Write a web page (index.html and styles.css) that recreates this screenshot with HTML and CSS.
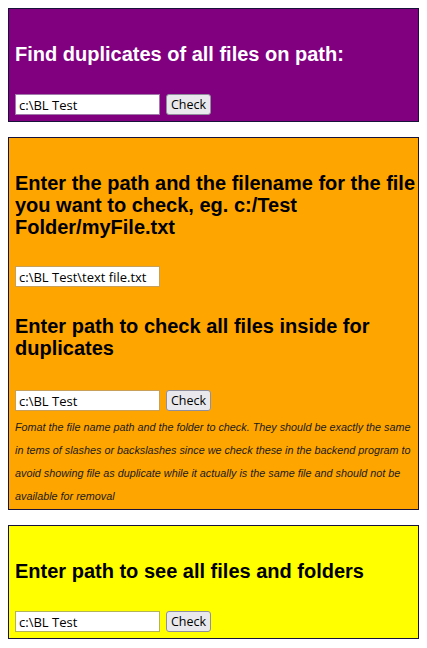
FILE: index.html
```html
<!DOCTYPE html>
<html lang="en">
<head>
<meta charset="utf-8">
<title>Duplicate finder</title>
<link rel="stylesheet" href="styles.css">
</head>
<body>
  <section class="box box-purple">
    <h2 class="title">Find duplicates of all files on path:</h2>
    <form class="row">
      <input class="field" type="text" value="c:\BL Test">
      <button class="btn" type="button">Check</button>
    </form>
  </section>

  <section class="box box-orange">
    <h2 class="title title-first">Enter the path and the filename for the file you want to check, eg. c:/Test Folder/myFile.txt</h2>
    <div class="row">
      <input class="field" type="text" value="c:\BL Test\text file.txt">
    </div>
    <h2 class="title title-follow">Enter path to check all files inside for duplicates</h2>
    <div class="row">
      <input class="field" type="text" value="c:\BL Test">
      <button class="btn" type="button">Check</button>
    </div>
    <p class="note">Fomat the file name path and the folder to check. They should be exactly the same in tems of slashes or backslashes since we check these in the backend program to avoid showing file as duplicate while it actually is the same file and should not be available for removal</p>
  </section>

  <section class="box box-yellow">
    <h2 class="title">Enter path to see all files and folders</h2>
    <form class="row">
      <input class="field" type="text" value="c:\BL Test">
      <button class="btn" type="button">Check</button>
    </form>
  </section>
</body>
</html>
```

FILE: styles.css
```css
html, body {
  margin: 0;
  padding: 0;
  background: #ffffff;
}

body {
  padding: 8px;
  font-family: "Liberation Sans", Arial, sans-serif;
}

.box {
  border: 1px solid #16123a;
  padding: 33.5px 2px 1px 6px;
  margin: 0 0 15px;
}

.box-purple { background: #800080; color: #ffffff; }
.box-orange { background: #ffa500; color: #000000; }
.box-yellow { background: #ffff00; color: #000000; }

.title {
  margin: 0 0 29.5px;
  font-family: "Liberation Sans", Arial, sans-serif;
  font-weight: bold;
  font-size: 20px;
  line-height: 22px;
}

.title-first {
  margin-bottom: 28.5px;
}

.title-follow {
  margin-top: 28px;
  margin-bottom: 31px;
}

.row {
  display: flex;
  align-items: center;
  gap: 6px;
  height: 21px;
  margin: 0 0 5px;
}

.field {
  box-sizing: border-box;
  width: 145px;
  height: 21px;
  margin: 0;
  padding: 0 3px;
  border: 1px solid #8f8f9d;
  background: #ffffff;
  color: #000000;
  font-family: "Open Sans", "Noto Sans", sans-serif;
  font-size: 13px;
}

.box-purple .field { border-color: #a07aa8; }
.box-orange .field { border-color: #c9a05a; }
.box-yellow .field { border-color: #b3b35a; }

.btn {
  box-sizing: border-box;
  height: 21px;
  margin: 0;
  padding: 0 4px;
  border: 1px solid #8f8f9d;
  border-radius: 3px;
  background: #e9e9ed;
  color: #000000;
  font-family: "Open Sans", "Noto Sans", sans-serif;
  font-size: 12.5px;
  line-height: 19px;
}

.note {
  margin: 0;
  padding-right: 4px;
  font-family: "Liberation Sans", Arial, sans-serif;
  font-style: italic;
  font-size: 10.8px;
  line-height: 23px;
  color: #1a1a1a;
}
```
